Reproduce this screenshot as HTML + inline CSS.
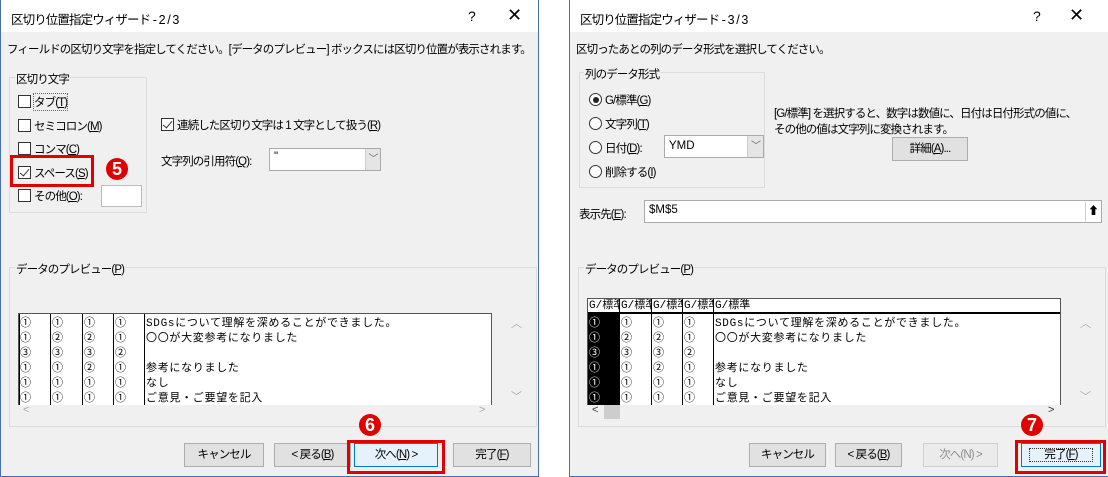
<!DOCTYPE html>
<html><head><meta charset="utf-8"><style>
*{box-sizing:border-box;margin:0;padding:0}
body{width:1108px;height:477px;background:#fff;position:relative;overflow:hidden;font-family:"Liberation Sans","Noto Sans CJK JP",sans-serif;font-size:11.5px;letter-spacing:-0.9px;color:#000}
.a{position:absolute;white-space:nowrap}
.dlg{position:absolute;top:0;height:477px;background:#f0f0f0;border:1px solid #4a6fb0;border-top:none}
.tb{position:absolute;left:0;right:0;top:0;height:32px;background:#fff}
.grp{position:absolute;border:1px solid #dcdcdc}
.cb{position:absolute;width:13px;height:13px;border:1px solid #333;background:#fff}
.cb.on::after{content:"";position:absolute;left:3px;top:0px;width:4px;height:8px;border:solid #333;border-width:0 1.5px 1.5px 0;transform:rotate(40deg)}
.rd{position:absolute;width:13px;height:13px;border:1px solid #333;border-radius:50%;background:#fff}
.rd.on::after{content:"";position:absolute;left:2.5px;top:2.5px;width:6px;height:6px;border-radius:50%;background:#222}
.btn{position:absolute;height:24px;background:#e1e1e1;border:1px solid #adadad;text-align:center;line-height:22px}
.inp{position:absolute;background:#fff;border:1px solid #aaa}
.red{position:absolute;border:3px solid #e00000}
.num{position:absolute;width:22px;height:22px;border-radius:50%;background:#e00000;color:#fff;font-weight:bold;font-size:18px;text-align:center;line-height:22px;letter-spacing:0}
.pv{position:absolute;background:#fff;border:1px solid #555;font-family:"Liberation Mono","Noto Sans CJK JP",monospace;font-size:11px;letter-spacing:0;overflow:hidden}
.row{position:absolute;left:0;height:15px;line-height:15px}
.vl{position:absolute;top:0;bottom:0;width:1px;background:#000}
.t{letter-spacing:0.7px}
u{text-decoration:underline}
.sc{position:absolute;color:#aaa;font-size:11px;letter-spacing:0}
</style></head><body>

<!-- LEFT DIALOG -->
<div class="dlg" style="left:0;width:539px">
 <div class="tb"></div>
 <div class="a" style="left:10px;top:9px;font-size:12.5px">区切り位置指定ウィザード - 2 / 3</div>
 <div class="a" style="left:467px;top:8px;font-size:14px">?</div>
 <div class="a" style="left:506px;top:5px;font-size:18px;font-weight:300">✕</div>
 <div class="a" style="left:6px;top:41px">フィールドの区切り文字を指定してください。[データのプレビュー] ボックスには区切り位置が表示されます。</div>
 <div class="grp" style="left:8px;top:77px;width:138px;height:136px"></div>
 <div class="a" style="left:14px;top:71px;background:#f0f0f0;padding:0 1px">区切り文字</div>
 <div class="cb" style="left:17px;top:95px"></div><div class="a" style="left:33px;top:94px;outline:1px dotted #666">タブ(<u>T</u>)</div>
 <div class="cb" style="left:17px;top:119px"></div><div class="a" style="left:33px;top:118px">セミコロン(<u>M</u>)</div>
 <div class="cb" style="left:17px;top:142px"></div><div class="a" style="left:33px;top:141px">コンマ(<u>C</u>)</div>
 <div class="cb on" style="left:17px;top:166px"></div><div class="a" style="left:33px;top:165px">スペース(<u>S</u>)</div>
 <div class="cb" style="left:17px;top:189px"></div><div class="a" style="left:33px;top:188px">その他(<u>O</u>):</div>
 <div class="inp" style="left:100px;top:185px;width:41px;height:22px;border-color:#bbb"></div>
 <div class="red" style="left:9px;top:155px;width:84px;height:32px"></div>
 <div class="num" style="left:105px;top:158px">5</div>
 <div class="cb on" style="left:160px;top:118px"></div><div class="a" style="left:176px;top:117px">連続した区切り文字は 1 文字として扱う(<u>R</u>)</div>
 <div class="a" style="left:160px;top:153px">文字列の引用符(<u>Q</u>):</div>
 <div class="inp" style="left:268px;top:148px;width:112px;height:23px"></div>
 <div class="a" style="left:273px;top:151px">"</div>
 <div class="a" style="left:364px;top:149px;width:15px;height:21px;background:#e5e5e5;border-left:1px solid #ccc;color:#666;text-align:center;font-size:10px;line-height:21px">﹀</div>
 <div class="grp" style="left:8px;top:267px;width:528px;height:160px"></div>
 <div class="a" style="left:14px;top:261px;background:#f0f0f0;padding:0 1px">データのプレビュー(<u>P</u>)</div>
 <div class="pv" style="left:17px;top:313px;width:474px;height:92px;border-bottom:none">
  <div class="vl" style="left:0"></div><div class="vl" style="left:31px"></div><div class="vl" style="left:63px"></div><div class="vl" style="left:94px"></div><div class="vl" style="left:125px"></div>
  <div class="row" style="top:3px"><span class="a" style="left:1px">①</span><span class="a" style="left:33px">①</span><span class="a" style="left:65px">①</span><span class="a" style="left:96px">①</span><span class="a t" style="left:127px">SDGsについて理解を深めることができました。</span></div>
  <div class="row" style="top:18px"><span class="a" style="left:1px">①</span><span class="a" style="left:33px">②</span><span class="a" style="left:65px">②</span><span class="a" style="left:96px">①</span><span class="a t" style="left:127px">〇〇が大変参考になりました</span></div>
  <div class="row" style="top:33px"><span class="a" style="left:1px">③</span><span class="a" style="left:33px">③</span><span class="a" style="left:65px">③</span><span class="a" style="left:96px">②</span></div>
  <div class="row" style="top:48px"><span class="a" style="left:1px">①</span><span class="a" style="left:33px">①</span><span class="a" style="left:65px">②</span><span class="a" style="left:96px">①</span><span class="a t" style="left:127px">参考になりました</span></div>
  <div class="row" style="top:63px"><span class="a" style="left:1px">①</span><span class="a" style="left:33px">①</span><span class="a" style="left:65px">①</span><span class="a" style="left:96px">①</span><span class="a t" style="left:127px">なし</span></div>
  <div class="row" style="top:78px"><span class="a" style="left:1px">①</span><span class="a" style="left:33px">①</span><span class="a" style="left:65px">①</span><span class="a" style="left:96px">①</span><span class="a t" style="left:127px">ご意見・ご要望を記入</span></div>
 </div>
 <div class="sc" style="left:510px;top:315px">︿</div>
 <div class="sc" style="left:510px;top:388px">﹀</div>
 <div class="sc" style="left:22px;top:404px">&lt;</div>
 <div class="sc" style="left:478px;top:404px">&gt;</div>
 <div class="btn" style="left:183px;top:443px;width:80px">キャンセル</div>
 <div class="btn" style="left:273px;top:443px;width:77px">&lt; 戻る(<u>B</u>)</div>
 <div class="btn" style="left:353px;top:443px;width:84px;border-color:#0078d7;background:#e5f1fb">次へ(<u>N</u>) &gt;</div>
 <div class="btn" style="left:452px;top:443px;width:78px">完了(<u>F</u>)</div>
 <div class="red" style="left:346px;top:440px;width:98px;height:34px"></div>
 <div class="num" style="left:358px;top:414px">6</div>
</div>

<!-- RIGHT DIALOG -->
<div class="dlg" style="left:569px;width:539px;border-right:none">
 <div class="tb"></div>
 <div class="a" style="left:10px;top:9px;font-size:12.5px">区切り位置指定ウィザード - 3 / 3</div>
 <div class="a" style="left:463px;top:8px;font-size:14px">?</div>
 <div class="a" style="left:499px;top:5px;font-size:18px;font-weight:300">✕</div>
 <div class="a" style="left:6px;top:41px">区切ったあとの列のデータ形式を選択してください。</div>
 <div class="grp" style="left:9px;top:72px;width:186px;height:116px"></div>
 <div class="a" style="left:14px;top:66px;background:#f0f0f0;padding:0 1px">列のデータ形式</div>
 <div class="rd on" style="left:19px;top:93px"></div><div class="a" style="left:35px;top:92px">G/標準(<u>G</u>)</div>
 <div class="rd" style="left:19px;top:117px"></div><div class="a" style="left:35px;top:116px">文字列(<u>T</u>)</div>
 <div class="rd" style="left:19px;top:141px"></div><div class="a" style="left:35px;top:140px">日付(<u>D</u>):</div>
 <div class="rd" style="left:19px;top:165px"></div><div class="a" style="left:35px;top:164px">削除する(<u>I</u>)</div>
 <div class="inp" style="left:94px;top:135px;width:100px;height:23px"></div>
 <div class="a" style="left:99px;top:140px;letter-spacing:0">YMD</div>
 <div class="a" style="left:177px;top:136px;width:16px;height:21px;background:#e5e5e5;border-left:1px solid #ccc;color:#666;text-align:center;font-size:10px;line-height:21px">﹀</div>
 <div class="a" style="left:204px;top:105px">[G/標準] を選択すると、数字は数値に、日付は日付形式の値に、</div>
 <div class="a" style="left:204px;top:121px">その他の値は文字列に変換されます。</div>
 <div class="btn" style="left:322px;top:137px;width:76px">詳細(<u>A</u>)...</div>
 <div class="a" style="left:9px;top:206px">表示先(<u>E</u>):</div>
 <div class="inp" style="left:74px;top:200px;width:458px;height:23px"></div>
 <div class="a" style="left:79px;top:204px;letter-spacing:0">$M$5</div>
 <div class="a" style="left:515px;top:202px;width:15px;height:19px;font-size:11px;text-align:center;line-height:19px;border-left:1px solid #ccc">⬆</div>
 <div class="grp" style="left:8px;top:267px;width:528px;height:160px"></div>
 <div class="a" style="left:14px;top:261px;background:#f0f0f0;padding:0 1px">データのプレビュー(<u>P</u>)</div>
 <div class="pv" style="left:17px;top:298px;width:474px;height:107px;border-bottom:none">
  <div class="a" style="left:0;top:15px;width:31px;height:92px;background:#000"></div>
  <div class="a" style="left:0;top:13px;width:474px;height:2px;background:#000"></div>
  <div class="vl" style="left:31px"></div><div class="vl" style="left:63px"></div><div class="vl" style="left:94px"></div><div class="vl" style="left:125px"></div>
  <div class="row" style="top:0"><span class="a" style="left:1px;width:30px;overflow:hidden">G/標準</span><span class="a" style="left:33px;width:30px;overflow:hidden">G/標準</span><span class="a" style="left:65px;width:29px;overflow:hidden">G/標準</span><span class="a" style="left:96px;width:29px;overflow:hidden">G/標準</span><span class="a" style="left:127px">G/標準</span></div>
  <div class="row" style="top:18px"><span class="a" style="left:1px;color:#fff">①</span><span class="a" style="left:33px">①</span><span class="a" style="left:65px">①</span><span class="a" style="left:96px">①</span><span class="a t" style="left:127px">SDGsについて理解を深めることができました。</span></div>
  <div class="row" style="top:33px"><span class="a" style="left:1px;color:#fff">①</span><span class="a" style="left:33px">②</span><span class="a" style="left:65px">②</span><span class="a" style="left:96px">①</span><span class="a t" style="left:127px">〇〇が大変参考になりました</span></div>
  <div class="row" style="top:48px"><span class="a" style="left:1px;color:#fff">③</span><span class="a" style="left:33px">③</span><span class="a" style="left:65px">③</span><span class="a" style="left:96px">②</span></div>
  <div class="row" style="top:63px"><span class="a" style="left:1px;color:#fff">①</span><span class="a" style="left:33px">①</span><span class="a" style="left:65px">②</span><span class="a" style="left:96px">①</span><span class="a t" style="left:127px">参考になりました</span></div>
  <div class="row" style="top:78px"><span class="a" style="left:1px;color:#fff">①</span><span class="a" style="left:33px">①</span><span class="a" style="left:65px">①</span><span class="a" style="left:96px">①</span><span class="a t" style="left:127px">なし</span></div>
  <div class="row" style="top:93px"><span class="a" style="left:1px;color:#fff">①</span><span class="a" style="left:33px">①</span><span class="a" style="left:65px">①</span><span class="a" style="left:96px">①</span><span class="a t" style="left:127px">ご意見・ご要望を記入</span></div>
 </div>
 <div class="sc" style="left:510px;top:315px">︿</div>
 <div class="sc" style="left:510px;top:388px">﹀</div>
 <div class="a" style="left:34px;top:405px;width:16px;height:14px;background:#cdcdcd"></div>
 <div class="sc" style="left:22px;top:404px;color:#333">&lt;</div>
 <div class="sc" style="left:478px;top:404px;color:#333">&gt;</div>
 <div class="btn" style="left:179px;top:443px;width:77px">キャンセル</div>
 <div class="btn" style="left:265px;top:443px;width:67px">&lt; 戻る(<u>B</u>)</div>
 <div class="btn" style="left:353px;top:443px;width:75px;color:#8d8d8d;background:#ebebeb;border-color:#cfcfcf">次へ(N) &gt;</div>
 <div class="btn" style="left:451px;top:443px;width:80px;border-color:#0078d7;background:#e5f1fb"><span style="outline:1px dotted #333;padding:0 14px">完了(<u>F</u>)</span></div>
 <div class="red" style="left:445px;top:440px;width:91px;height:34px"></div>
 <div class="num" style="left:451px;top:414px">7</div>
</div>
</body></html>
